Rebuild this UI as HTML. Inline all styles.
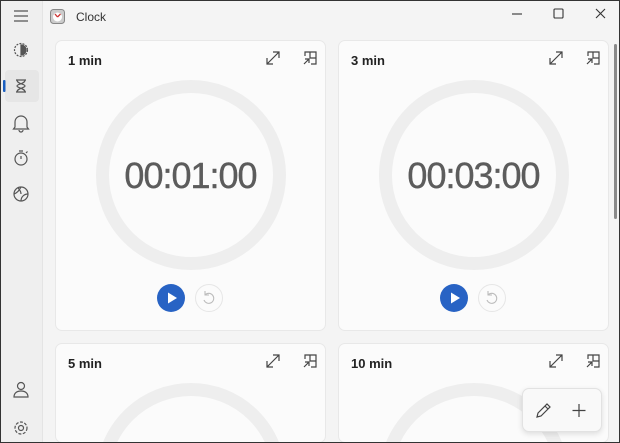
<!DOCTYPE html>
<html><head><style>
*{margin:0;padding:0;box-sizing:border-box}
html,body{width:620px;height:443px;overflow:hidden}
body{background:#f3f3f3;font-family:"Liberation Sans",sans-serif;position:relative}
.win{position:absolute;left:0;top:0;width:620px;height:443px;overflow:hidden;background:#f4f4f4}
.frame{position:absolute;left:0;top:0;width:620px;height:443px;border:1px solid #333;pointer-events:none}
.side{position:absolute;left:0;top:0;width:43px;height:443px;background:#efefef;border-right:1px solid #e4e4e4}
.card{position:absolute;width:271px;height:291px;background:#fbfbfb;border:1px solid #e8e8e8;border-radius:7px;overflow:hidden}
.t{position:absolute;left:12px;top:12px;font-size:13px;font-weight:bold;color:#222}
.ring{position:absolute;left:40px;top:39px;width:190px;height:190px;border-radius:50%;border:13px solid #eeeeee}
.time{position:absolute;left:0;width:100%;top:114px;text-align:center;font-size:36px;letter-spacing:-1px;color:#5c5c5c;-webkit-text-stroke:0.4px #5c5c5c}
.ic{position:absolute;top:8px}
.play{position:absolute;left:101px;top:243px;width:28px;height:28px;border-radius:50%;background:#2863c4}
.rst{position:absolute;left:139px;top:243px;width:28px;height:28px;border-radius:50%;border:1px solid #e6e6e6;background:#fbfbfb}
</style></head><body><div class="win">
<div class="side">
<svg width="43" height="443" fill="none" stroke="#555" stroke-width="1.2">
<path d="M14 11h14M14 16h14M14 21h14"/>
<circle cx="21" cy="50" r="6.5" stroke-dasharray="2 1.2"/><path d="M21 45a5 5 0 0 1 0 10z" fill="#555"/>
<rect x="5" y="70" width="34" height="32" rx="4" fill="#e6e6e6" stroke="none"/>
<rect x="3" y="80" width="2.5" height="12" rx="1" fill="#1a5fc0" stroke="none"/>
<path d="M16 80h10M16 92h10M17 80c0 4 8 4 8 6s-8 2-8 6M25 80c0 4-8 4-8 6s8 2 8 6"/>
<path d="M15 127v-5a6 6 0 0 1 12 0v5l1.5 2h-15zM19 130a2 2 0 0 0 4 0"/>
<circle cx="21" cy="159" r="6"/><path d="M19 151h4M21 159v-3M26 153l1.5-1.5"/>
<circle cx="21" cy="194" r="7"/><path d="M14 194c3-1 5-3 7-7M21 201c0-4 3-7 7-7M18 188c2 2 3 4 3 6"/>
<circle cx="21" cy="386" r="3.5"/><path d="M14 397c0-4 3-6 7-6s7 2 7 6z"/>
<circle cx="21" cy="428" r="2.5"/><circle cx="21" cy="428" r="6" stroke-dasharray="3 1.5"/>
</svg></div>
<svg style="position:absolute;left:50px;top:9px" width="15" height="15"><rect x="0.5" y="0.5" width="14" height="14" rx="3" fill="#ccc" stroke="#888"/><circle cx="7.5" cy="8" r="4.5" fill="#fff"/><path d="M7.5 8L5 5M7.5 8l3-3" stroke="#c33" stroke-width="1.3"/></svg>
<div style="position:absolute;left:76px;top:10px;font-size:12px;color:#333">Clock</div>
<svg style="position:absolute;left:505px;top:5px" width="110" height="18" stroke="#333" stroke-width="1.1" fill="none"><path d="M7 9h10"/><rect x="49" y="4" width="9" height="9" rx="1"/><path d="M91 4l9 9M100 4l-9 9"/></svg>
<div style="position:absolute;left:614px;top:44px;width:3px;height:175px;border-radius:2px;background:#8a8a8a"></div>

<div class="card" style="left:55px;top:40px">
<div class="t">1 min</div>
<svg class="ic" style="left:208px" width="18" height="18" stroke="#444" stroke-width="1.2" fill="none"><path d="M3 15L15 3M9 3h6v6M3 9v6h6"/></svg>
<svg class="ic" style="left:245px" width="18" height="18" stroke="#444" stroke-width="1.2" fill="none"><path d="M4 7V3h11v12h-5M9 3v6h6M3 15l5-5M4 10h4v4"/></svg>
<div class="ring"></div><div class="time">00:01:00</div>
<div class="play"><svg width="28" height="28"><path d="M11 8.5v11l9-5.5z" fill="#fff"/></svg></div>
<div class="rst"><svg width="26" height="26" fill="none" stroke="#bbb" stroke-width="1.1"><path d="M9 10a5 5 0 1 1-1 5M9 6v4h4"/></svg></div>
</div>
<div class="card" style="left:338px;top:40px">
<div class="t">3 min</div>
<svg class="ic" style="left:208px" width="18" height="18" stroke="#444" stroke-width="1.2" fill="none"><path d="M3 15L15 3M9 3h6v6M3 9v6h6"/></svg>
<svg class="ic" style="left:245px" width="18" height="18" stroke="#444" stroke-width="1.2" fill="none"><path d="M4 7V3h11v12h-5M9 3v6h6M3 15l5-5M4 10h4v4"/></svg>
<div class="ring"></div><div class="time">00:03:00</div>
<div class="play"><svg width="28" height="28"><path d="M11 8.5v11l9-5.5z" fill="#fff"/></svg></div>
<div class="rst"><svg width="26" height="26" fill="none" stroke="#bbb" stroke-width="1.1"><path d="M9 10a5 5 0 1 1-1 5M9 6v4h4"/></svg></div>
</div>
<div class="card" style="left:55px;top:343px;height:100px">
<div class="t">5 min</div>
<svg class="ic" style="left:208px" width="18" height="18" stroke="#444" stroke-width="1.2" fill="none"><path d="M3 15L15 3M9 3h6v6M3 9v6h6"/></svg>
<svg class="ic" style="left:245px" width="18" height="18" stroke="#444" stroke-width="1.2" fill="none"><path d="M4 7V3h11v12h-5M9 3v6h6M3 15l5-5M4 10h4v4"/></svg>
<div class="ring"></div>
</div>
<div class="card" style="left:338px;top:343px;height:100px">
<div class="t">10 min</div>
<svg class="ic" style="left:208px" width="18" height="18" stroke="#444" stroke-width="1.2" fill="none"><path d="M3 15L15 3M9 3h6v6M3 9v6h6"/></svg>
<svg class="ic" style="left:245px" width="18" height="18" stroke="#444" stroke-width="1.2" fill="none"><path d="M4 7V3h11v12h-5M9 3v6h6M3 15l5-5M4 10h4v4"/></svg>
<div class="ring"></div>
</div>
<div style="position:absolute;left:522px;top:388px;width:80px;height:44px;background:#f9f9f9;border:1px solid #e2e2e2;border-radius:7px;box-shadow:0 2px 6px rgba(0,0,0,.12)">
<svg width="80" height="44" fill="none" stroke="#444" stroke-width="1.2"><path d="M14 28l1-4 9-9 3 3-9 9zM22 17l3 3"/><path d="M56 15v13M49.5 21.5h13"/></svg>
</div>
<div class="frame"></div>
</div></body></html>
